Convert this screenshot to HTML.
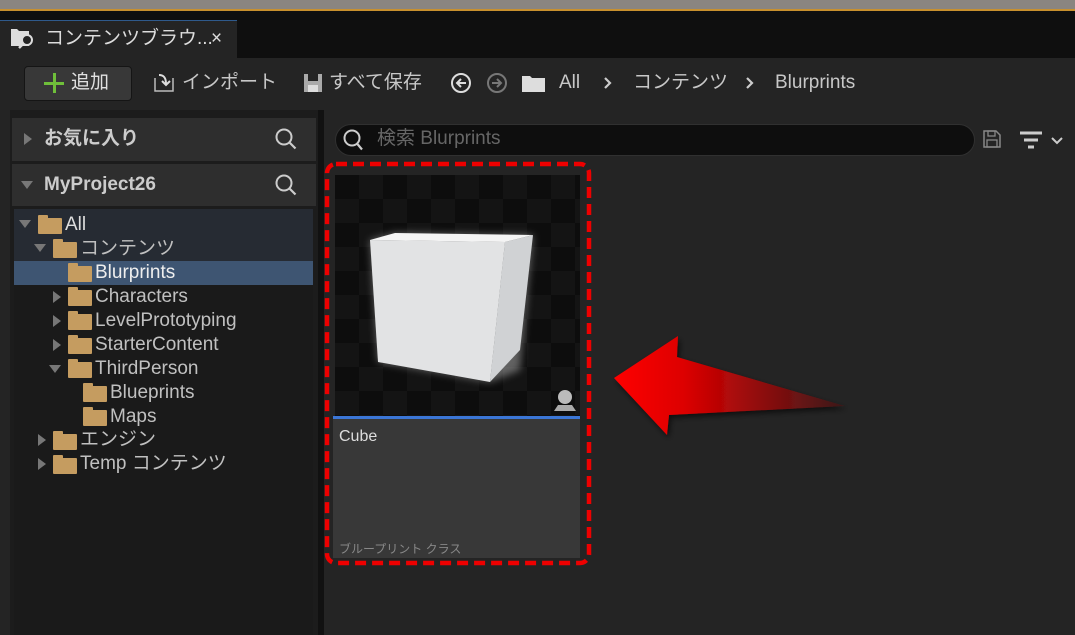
<!DOCTYPE html>
<html><head><meta charset="utf-8"><style>
*{margin:0;padding:0;box-sizing:border-box}
body{width:1075px;height:635px;overflow:hidden;background:#1a1a1a;font-family:"Liberation Sans","Noto Sans CJK JP",sans-serif;color:#c0c0c0;position:relative}
.a{position:absolute}
.t{font-size:19px;white-space:nowrap;line-height:22px;height:22px}
.fold{position:absolute;width:24px;height:16px;background:#c59c60;border-radius:1px}
.fold:before{content:"";position:absolute;left:0;top:-3px;width:10px;height:4px;background:#c59c60;border-radius:1px 1px 0 0}
.tri{position:absolute;width:0;height:0}
.tr{border-top:6px solid transparent;border-bottom:6px solid transparent;border-left:8px solid #777}
.td{border-left:6px solid transparent;border-right:6px solid transparent;border-top:8px solid #777}
</style></head><body>
<div class="a" style="left:0;top:0;width:1075px;height:10px;background:#8a8580"></div>
<div class="a" style="left:0;top:9px;width:1075px;height:2px;background:#c8902e"></div>
<div class="a" style="left:0;top:11px;width:1075px;height:47px;background:#0f0f0f"></div>
<div class="a" style="left:0;top:20px;width:237px;height:38px;background:#242424;border-top:1px solid #2f5a8c"></div>
<svg class="a" style="left:10px;top:26px" width="28" height="24" viewBox="0 0 28 24"><path d="M1 3h6l2 2h10v15H1z" fill="#ddd"/><circle cx="17" cy="14" r="5" fill="#242424" stroke="#ddd" stroke-width="2"/><path d="M13 18l-4 4" stroke="#ddd" stroke-width="2.5"/></svg>
<div class="a t" style="left:45px;top:28px;color:#ddd">コンテンツブラウ...</div>
<div class="a t" style="left:211px;top:28px;color:#ddd">×</div>
<div class="a" style="left:0;top:58px;width:1075px;height:52px;background:#242424"></div>
<div class="a" style="left:24px;top:66px;width:108px;height:35px;background:#383838;border:1px solid #151515;border-radius:4px"></div>
<div class="a" style="left:44px;top:82px;width:20px;height:3px;background:#6fbf3a"></div>
<div class="a" style="left:53px;top:73px;width:3px;height:20px;background:#6fbf3a"></div>
<div class="a t" style="left:71px;top:72px;color:#e0e0e0">追加</div>
<svg class="a" style="left:152px;top:72px" width="24" height="22"><path d="M3 6v13h18V6" fill="none" stroke="#bbb" stroke-width="1.5"/><path d="M7 3c5 0 7 3 7 9m-4-3l4 4 4-4" fill="none" stroke="#ddd" stroke-width="2"/></svg>
<div class="a t" style="left:182px;top:72px;color:#c8c8c8">インポート</div>
<svg class="a" style="left:302px;top:72px" width="22" height="22"><rect x="2" y="2" width="18" height="18" fill="#aaa"/><rect x="6" y="2" width="10" height="7" fill="#242424"/><rect x="6" y="13" width="10" height="7" fill="#ddd"/></svg>
<div class="a t" style="left:329px;top:72px;color:#c8c8c8">すべて保存</div>
<svg class="a" style="left:450px;top:72px" width="100" height="22"><circle cx="11" cy="11" r="9" fill="none" stroke="#ddd" stroke-width="2"/><path d="M16 11H7m4-4l-4 4 4 4" fill="none" stroke="#ddd" stroke-width="2"/><circle cx="47" cy="11" r="9" fill="none" stroke="#777" stroke-width="2"/><path d="M42 11h9m-4-4l4 4-4 4" fill="none" stroke="#777" stroke-width="2"/><path d="M72 4h8l2 2h13v14H72z" fill="#ddd"/></svg>
<div class="a t" style="left:559px;top:72px;color:#c8c8c8">All</div>
<svg class="a" style="left:603px;top:76px" width="10" height="14"><path d="M2 2l5 5-5 5" fill="none" stroke="#ccc" stroke-width="2.2"/></svg>
<div class="a t" style="left:633px;top:72px;color:#c8c8c8">コンテンツ</div>
<svg class="a" style="left:745px;top:76px" width="10" height="14"><path d="M2 2l5 5-5 5" fill="none" stroke="#ccc" stroke-width="2.2"/></svg>
<div class="a t" style="left:775px;top:72px;color:#c8c8c8">Blurprints</div>
<!-- left panel -->
<div class="a" style="left:0;top:110px;width:10px;height:525px;background:#242424"></div>
<div class="a" style="left:10px;top:110px;width:308px;height:525px;background:#1c1c1c"></div>
<div class="a" style="left:12px;top:118px;width:304px;height:43px;background:#2e2e2e"></div>
<div class="a" style="left:12px;top:164px;width:304px;height:42px;background:#2e2e2e"></div>
<div class="tri tr" style="left:24px;top:133px"></div>
<div class="a t" style="left:44px;top:128px;color:#ccc;font-weight:bold">お気に入り</div>
<div class="tri td" style="left:21px;top:181px"></div>
<div class="a t" style="left:44px;top:174px;color:#ccc;font-weight:bold">MyProject26</div>
<svg class="a" style="left:274px;top:127px" width="24" height="24"><circle cx="10" cy="10" r="7.5" fill="none" stroke="#ccc" stroke-width="2"/><path d="M15.5 15.5l6 6" stroke="#ccc" stroke-width="2.2"/></svg>
<svg class="a" style="left:274px;top:173px" width="24" height="24"><circle cx="10" cy="10" r="7.5" fill="none" stroke="#ccc" stroke-width="2"/><path d="M15.5 15.5l6 6" stroke="#ccc" stroke-width="2.2"/></svg>
<div class="a" style="left:14px;top:209px;width:299px;height:426px;background:#1a1a1a"></div>
<div class="a" style="left:14px;top:209px;width:299px;height:52px;background:#262b33"></div>
<div class="a" style="left:14px;top:261px;width:299px;height:24px;background:#3e5572"></div>
<div class="tri td" style="left:19px;top:220px"></div><div class="fold" style="left:38px;top:218px"></div><div class="a t" style="left:65px;top:214px;color:#ddd">All</div>
<div class="tri td" style="left:34px;top:244px"></div><div class="fold" style="left:53px;top:242px"></div><div class="a t" style="left:80px;top:238px">コンテンツ</div>
<div class="fold" style="left:68px;top:266px"></div><div class="a t" style="left:95px;top:262px;color:#eee">Blurprints</div>
<div class="tri tr" style="left:53px;top:291px"></div><div class="fold" style="left:68px;top:290px"></div><div class="a t" style="left:95px;top:286px">Characters</div>
<div class="tri tr" style="left:53px;top:315px"></div><div class="fold" style="left:68px;top:314px"></div><div class="a t" style="left:95px;top:310px">LevelPrototyping</div>
<div class="tri tr" style="left:53px;top:339px"></div><div class="fold" style="left:68px;top:338px"></div><div class="a t" style="left:95px;top:334px">StarterContent</div>
<div class="tri td" style="left:49px;top:365px"></div><div class="fold" style="left:68px;top:362px"></div><div class="a t" style="left:95px;top:358px">ThirdPerson</div>
<div class="fold" style="left:83px;top:386px"></div><div class="a t" style="left:110px;top:382px">Blueprints</div>
<div class="fold" style="left:83px;top:410px"></div><div class="a t" style="left:110px;top:406px">Maps</div>
<div class="tri tr" style="left:38px;top:434px"></div><div class="fold" style="left:53px;top:434px"></div><div class="a t" style="left:80px;top:429px">エンジン</div>
<div class="tri tr" style="left:38px;top:458px"></div><div class="fold" style="left:53px;top:458px"></div><div class="a t" style="left:80px;top:453px">Temp コンテンツ</div>
<!-- right panel -->
<div class="a" style="left:318px;top:110px;width:6px;height:525px;background:#111"></div>
<div class="a" style="left:324px;top:110px;width:751px;height:525px;background:#242424"></div>
<div class="a" style="left:335px;top:124px;width:640px;height:32px;background:#0e0e0e;border:1px solid #303030;border-radius:16px"></div>
<svg class="a" style="left:341px;top:127px" width="26" height="26"><circle cx="11" cy="11" r="7.5" fill="none" stroke="#ccc" stroke-width="2"/><path d="M16 16.5l5 6" stroke="#ccc" stroke-width="2.2"/></svg>
<div class="a t" style="left:377px;top:128px;color:#666">検索 Blurprints</div>
<svg class="a" style="left:982px;top:129px" width="20" height="20"><path d="M2 2h12l4 4v12H2z" fill="none" stroke="#888" stroke-width="1.5"/><rect x="6" y="2" width="7" height="5" fill="none" stroke="#888" stroke-width="1.3"/><rect x="5" y="11" width="10" height="7" fill="none" stroke="#888" stroke-width="1.3"/></svg>
<svg class="a" style="left:1018px;top:128px" width="50" height="24"><path d="M2 5h22M6 12h14M10 19h6" stroke="#ccc" stroke-width="3"/><path d="M34 10l5 5 5-5" fill="none" stroke="#ccc" stroke-width="2"/></svg>
<!-- card -->
<div class="a" style="left:335px;top:175px;width:245px;height:241px;background-color:#0d0d0d;background-image:linear-gradient(45deg,#141414 25%,transparent 25%,transparent 75%,#141414 75%),linear-gradient(45deg,#141414 25%,transparent 25%,transparent 75%,#141414 75%);background-size:48px 48px;background-position:0 0,24px 24px"></div>
<svg class="a" style="left:335px;top:175px" width="245" height="241"><defs><filter id="g"><feGaussianBlur stdDeviation="4"/></filter></defs>
<polygon points="35,65 60,58 198,60 185,195 155,207 43,187" fill="#fff" opacity=".35" filter="url(#g)"/>
<polygon points="35,65 60,58 198,60 170,67" fill="#f4f4f4"/>
<polygon points="35,65 170,67 155,207 43,187" fill="#e2e3e4"/>
<polygon points="170,67 198,60 185,175 155,207" fill="#d0d2d4"/>
<circle cx="230" cy="222" r="7" fill="#bbb"/><path d="M219 236h22l-4-6h-14z" fill="#aaa"/></svg>
<div class="a" style="left:333px;top:416px;width:247px;height:3px;background:#3b76d6"></div>
<div class="a" style="left:333px;top:419px;width:247px;height:139px;background:#383838"></div>
<div class="a" style="left:339px;top:428px;font-size:16px;color:#ddd">Cube</div>
<div class="a" style="left:339px;top:540px;font-size:12px;color:#888">ブループリント クラス</div>
<svg class="a" style="left:322px;top:160px" width="272" height="408"><rect x="5" y="4" width="262" height="399" rx="9" fill="none" stroke="#e00" stroke-width="4.5" stroke-dasharray="11 6"/></svg>
<svg class="a" style="left:600px;top:320px" width="260" height="130"><defs><linearGradient id="r" x1="0" x2="1"><stop offset="0" stop-color="#f00"/><stop offset=".3" stop-color="#d00"/><stop offset="1" stop-color="#3a1a1a"/></linearGradient><filter id="s"><feDropShadow dx="2" dy="3" stdDeviation="3" flood-color="#000" flood-opacity=".6"/></filter></defs>
<polygon points="14,58 78,16 77,37 245,86 69,95 67,115" fill="url(#r)" filter="url(#s)"/></svg>
</body></html>
